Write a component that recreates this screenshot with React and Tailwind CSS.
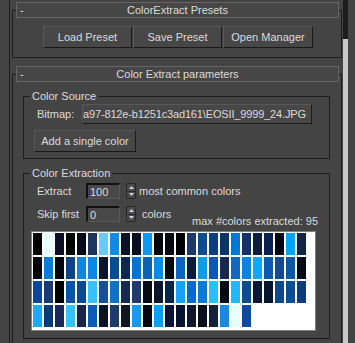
import React from "react";

const COLORS = [
  "#000000","#e8ffff","#0a1025","#020304","#060a18","#1e3560","#66ccf5","#0f8ae8","#0a1228","#060d22","#0a98f5","#030608","#050810","#000000","#1b3a6a","#0d4c94","#0c3e80","#0b3468","#0078d8","#14306a","#101c3c","#0c2050","#03060e","#00a0ff","#142448",
  "#02040a","#0a7ad8","#030810","#0c4488","#0a88e0","#0a88e8","#0a1430","#0a4c98","#0f2850","#0a72d0","#0864b8","#0a8ae8","#050a10","#0a64c0","#0a1a40","#0f9af0","#0c58b0","#182850","#1068c0","#0a84e0","#0aa8ff","#0c5ab0","#154a90","#0c58a8","#050a18",
  "#0c4898","#1a3a70","#000000","#0854a8","#0c4890","#38c0ff","#185098","#0a72c8","#142850","#1e3a70","#050a14","#0a1630","#0a2448","#18a0f8","#0868d0","#0c78d8","#28c0ff","#050a10","#20b8ff","#0c4c90","#0a1838","#061430","#0a4890","#0a4c98","#0c3c78",
  "#20a8f8","#0a3a78","#1a2858","#38c0ff","#1a2444","#0a5cb8","#0a1228","#1e3a6a","#10161e","#1898f0","#040810","#0aa0f8","#0a1430","#061430","#101a2c","#081020","#142038","#1c88e0","#e8ffff","#0c4c98",
];

function Btn({ className = "", children }) {
  return (
    <div
      className={
        "flex items-center justify-center bg-[#474747] border border-t-[#585858] border-l-[#585858] border-b-[#1a1a1a] border-r-[#1a1a1a] " +
        className
      }
    >
      {children}
    </div>
  );
}

function Header({ title }) {
  return (
    <div className="relative -mt-[9px] ml-[3px] mr-[2px] h-[16px] bg-[#464646] border border-[#666666] grid grid-cols-[16px_1fr_16px] items-center">
      <span className="pl-[3px] leading-[14px]">-</span>
      <span className="text-center leading-[14px]">{title}</span>
      <span />
    </div>
  );
}

function Legend({ children }) {
  return (
    <div className="-mt-[8px] ml-[6px] w-fit px-[2px] bg-[#444444] leading-[15px]">
      {children}
    </div>
  );
}

function Spinner() {
  return (
    <div className="w-[10px] h-[16px] flex flex-col bg-[#4a4a4a] border border-[#262626] rounded-[2px] shrink-0">
      <div className="flex-1 flex items-center justify-center border-b border-[#2a2a2a]">
        <svg width="5" height="3" viewBox="0 0 5 3">
          <path d="M0 3L2.5 0L5 3Z" fill="#d4d4d4" />
        </svg>
      </div>
      <div className="flex-1 flex items-center justify-center">
        <svg width="5" height="3" viewBox="0 0 5 3">
          <path d="M0 0L5 0L2.5 3Z" fill="#d4d4d4" />
        </svg>
      </div>
    </div>
  );
}

function NumField({ value }) {
  return (
    <div className="w-[34px] h-[16px] shrink-0 bg-[#484848] border-t-2 border-l-2 border-t-[#101010] border-l-[#101010] border-b border-r border-b-[#585858] border-r-[#585858] flex items-center pl-[2px] leading-[12px]">
      {value}
    </div>
  );
}

export default function App() {
  return (
    <div className="w-[355px] h-[343px] bg-[#444444] overflow-hidden flex text-[#dcdcdc] text-[11px] leading-[13px] font-['Liberation_Sans',Arial,sans-serif]">
      <div className="w-[9px] shrink-0" />
      <div className="w-[1px] shrink-0 bg-[#1c1c1c]" />
      <div className="w-[2px] shrink-0" />
      <div className="w-[330px] shrink-0 flex flex-col">
        {/* Rollout 1 */}
        <div className="mt-[10px] border border-[#1c1c1c] pb-[9px]">
          <Header title="ColorExtract Presets" />
          <div className="mt-[8px] ml-[30px] flex gap-[1px]">
            <Btn className="w-[89px] h-[22px]">Load Preset</Btn>
            <Btn className="w-[89px] h-[22px]">Save Preset</Btn>
            <Btn className="w-[90px] h-[22px]">Open Manager</Btn>
          </div>
        </div>

        {/* Rollout 2 */}
        <div className="mt-[16px] border border-[#1c1c1c] pb-[20px]">
          <Header title="Color Extract parameters" />

          {/* Color Source */}
          <div className="mt-[14px] ml-[10px] mr-[11px] border border-[#1c1c1c] pb-[6px]">
            <Legend>Color Source</Legend>
            <div className="flex items-center h-[20px] pl-[13px]">
              <span className="w-[45px] shrink-0">Bitmap:</span>
              <div className="w-[230px] h-[20px] shrink-0 overflow-hidden whitespace-nowrap flex items-center bg-[#474747] border border-t-[#585858] border-l-[#585858] border-b-[#1a1a1a] border-r-[#1a1a1a] tracking-[-0.15px]">
                a97-812e-b1251c3ad161\EOSII_9999_24.JPG
              </div>
            </div>
            <Btn className="mt-[6px] ml-[10px] w-[102px] h-[22px]">Add a single color</Btn>
          </div>

          {/* Color Extraction */}
          <div className="mt-[14px] ml-[10px] mr-[11px] border border-[#1c1c1c] pb-[7px]">
            <Legend>Color Extraction</Legend>
            <div className="mt-[2px] flex items-center h-[16px] pl-[13px]">
              <span className="w-[49px] shrink-0">Extract</span>
              <NumField value="100" />
              <div className="ml-[6px]">
                <Spinner />
              </div>
              <span className="ml-[3px] whitespace-nowrap">most common colors</span>
            </div>
            <div className="mt-[7px] flex items-start pl-[13px] pr-[11px]">
              <div className="flex items-center h-[16px]">
                <span className="w-[49px] shrink-0">Skip first</span>
                <NumField value="0" />
                <div className="ml-[6px]">
                  <Spinner />
                </div>
                <span className="ml-[6px] whitespace-nowrap">colors</span>
              </div>
              <span className="ml-auto mt-[7px] leading-[16px] whitespace-nowrap">
                max #colors extracted: 95
              </span>
            </div>
            <div className="mt-[2px] ml-[7px] w-[285px] h-[100px] bg-white border border-[#808080] p-[1px]">
              <div className="grid grid-cols-[repeat(25,9px)] auto-rows-[22px] gap-[2px]">
                {COLORS.map((c, i) => (
                  <div key={i} style={{ backgroundColor: c }} />
                ))}
              </div>
            </div>
          </div>
        </div>
      </div>
      <div className="w-[1px] shrink-0" />
      <div className="w-[5px] shrink-0 flex flex-col">
        <div className="h-[39px] bg-[#1c1c1c]" />
        <div className="flex-1 bg-[#c8c8c8]" />
      </div>
    </div>
  );
}
